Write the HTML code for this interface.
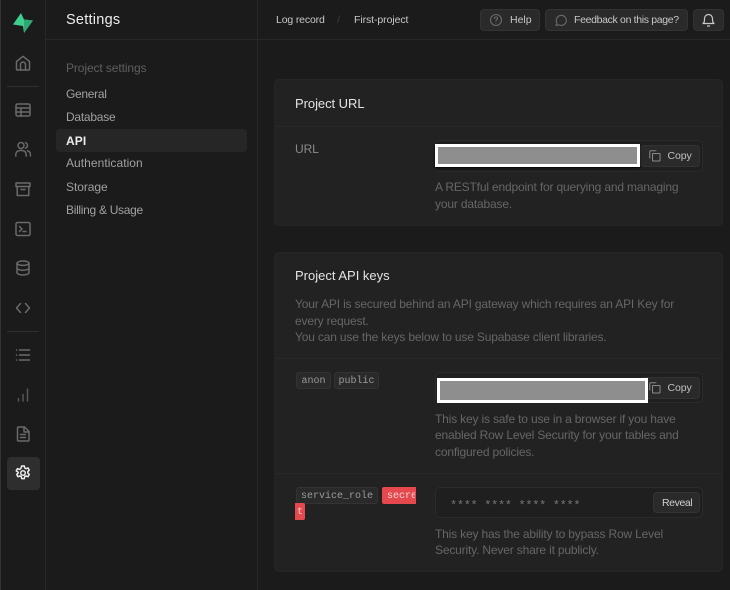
<!DOCTYPE html>
<html><head><meta charset="utf-8">
<style>
html,body{margin:0;padding:0;width:730px;height:590px;overflow:hidden;background:#1b1b1b;font-family:"Liberation Sans",sans-serif;}
#w{position:absolute;left:0;top:0;width:730px;height:590px;background:#1b1b1b;overflow:hidden;filter:blur(.35px);}
.a{position:absolute;white-space:nowrap;line-height:16px;}
.line{position:absolute;background:#282828;}
.ic{position:absolute;fill:none;stroke:#6a6a6a;stroke-width:1.5;stroke-linecap:round;stroke-linejoin:round;}
.nav{left:66px;font-size:12px;color:#a0a0a0;letter-spacing:-.05px;}
.desc{font-size:12px;color:#666;letter-spacing:-.17px;}
.card{position:absolute;left:274px;width:449px;background:#222;border:1px solid #262626;box-sizing:border-box;border-radius:5px;}
.btn{position:absolute;background:#2a2a2a;border:1px solid #333;box-sizing:border-box;border-radius:4px;}
.box{position:absolute;background:#1f1f1f;border:1px solid #2b2b2b;box-sizing:border-box;border-radius:5px;}
.tag{position:absolute;background:#2a2a2a;border:1px solid #333;box-sizing:border-box;border-radius:3px;font:10px/17px "Liberation Mono",monospace;color:#9a9a9a;text-align:center;}
.mask{position:absolute;background:#8e8e8e;border:3px solid #fff;box-sizing:border-box;}
.hd{font-size:10.5px;color:#c8c8c8;letter-spacing:-.15px;}
</style></head><body><div id="w">
<div class="a" style="left:0;top:0;width:1px;height:590px;background:#333"></div>
<div class="line" style="left:45px;top:0;width:1px;height:590px"></div>
<div class="line" style="left:257px;top:0;width:1px;height:590px"></div>
<div class="line" style="left:46px;top:39px;width:684px;height:1px"></div>

<svg class="a" style="left:13px;top:13px" width="21" height="21" viewBox="0 0 21 21"><path d="M8 0L11 6.500L20 7.500L11 20L10 13L0 11.500z" fill="#3ecf8e"/><path d="M11 6.500L20 7.500L11 20z" fill="#2fa873"/></svg>

<svg class="ic" style="left:15px;top:55px" width="16" height="16" viewBox="0 0 16 16"><path d="M1.500 6.500L8 1.300l6.500 5.200V14a1 1 0 0 1-1 1h-11a1 1 0 0 1-1-1z"/><path d="M5.500 15V9.500a2.500 2.500 0 0 1 5 0V15"/></svg>
<div class="line" style="left:7px;top:86px;width:32px;height:1px;background:#303030"></div>
<svg class="ic" style="left:15px;top:102px" width="16" height="16" viewBox="0 0 16 16"><rect x="1" y="2" width="14" height="12" rx="1.500"/><path d="M1 6h14M1 10h14M6 6v8"/></svg>
<svg class="ic" style="left:15px;top:141px" width="16" height="16" viewBox="0 0 16 16"><circle cx="6" cy="4.500" r="3"/><path d="M0.800 15v-1.500a4 4 0 0 1 4-4h2.400a4 4 0 0 1 4 4V15"/><path d="M10.500 1.700a3 3 0 0 1 0 5.600M12.500 9.800a4 4 0 0 1 3 3.700V15"/></svg>
<svg class="ic" style="left:15px;top:181px" width="16" height="16" viewBox="0 0 16 16"><rect x="1" y="2" width="14" height="3.500"/><path d="M2.200 5.500V14.500H13.800V5.500M6 8.500h4"/></svg>
<svg class="ic" style="left:15px;top:221px" width="16" height="16" viewBox="0 0 16 16"><rect x="1" y="1.500" width="14" height="13" rx="1.500"/><path d="M4.500 5.500L7 8l-2.500 2.500M8 10.500h3"/></svg>
<svg class="ic" style="left:15px;top:260px" width="16" height="16" viewBox="0 0 16 16"><ellipse cx="8" cy="3.200" rx="6" ry="2.200"/><path d="M2 3.200v9.600c0 1.200 2.700 2.200 6 2.200s6-1 6-2.200V3.200M2 8c0 1.200 2.700 2.200 6 2.200s6-1 6-2.200"/></svg>
<svg class="ic" style="left:15px;top:300px" width="16" height="16" viewBox="0 0 16 16"><path d="M5.500 3.500L1.500 8l4 4.500M10.500 3.500l4 4.500-4 4.500"/></svg>
<div class="line" style="left:7px;top:331px;width:32px;height:1px;background:#303030"></div>
<svg class="ic" style="left:15px;top:347px" width="16" height="16" viewBox="0 0 16 16"><path d="M4.500 3h10M4.500 8h10M4.500 13h10M1.500 3h.1M1.500 8h.1M1.500 13h.1"/></svg>
<svg class="ic" style="left:15px;top:387px;stroke:#565656" width="16" height="16" viewBox="0 0 16 16"><path d="M3.500 14v-2.500M8 14V7.500M12.500 14V2"/></svg>
<svg class="ic" style="left:15px;top:426px" width="16" height="16" viewBox="0 0 16 16"><path d="M3.500 1h6L14 5.500V14a1 1 0 0 1-1 1H3.500a1 1 0 0 1-1-1V2a1 1 0 0 1 1-1z"/><path d="M9 1v5h5M5.500 8.500h5M5.500 11.500h5"/></svg>
<div class="a" style="left:7px;top:457px;width:33px;height:33px;background:#2e2e2e;border-radius:4px"></div>
<svg class="ic" style="left:15px;top:465px;stroke:#ededed" width="16" height="16" viewBox="0 0 16 16"><circle cx="8" cy="8" r="2.300"/><path d="M6.700 1h2.600l.4 2 1.400.7 1.900-.8 1.300 2.300-1.500 1.300v1.600l1.500 1.300-1.300 2.300-1.900-.8-1.400.7-.4 2H6.700l-.4-2-1.400-.7-1.900.8-1.300-2.300 1.500-1.300V7.200L1.200 5.900l1.300-2.300 1.900.8 1.400-.7z"/></svg>

<div class="a" style="left:66px;top:11px;font-size:14.500px;line-height:18px;color:#ededed;letter-spacing:.25px">Settings</div>
<div class="a nav" style="top:60px;color:#5f5f5f;letter-spacing:-.1px">Project settings</div>
<div class="a nav" style="top:86px;letter-spacing:-.3px">General</div>
<div class="a nav" style="top:109px;letter-spacing:-.25px">Database</div>
<div class="a" style="left:56px;top:129px;width:191px;height:23px;background:#262626;border-radius:4px"></div>
<div class="a nav" style="top:132.500px;color:#ededed;font-weight:bold;letter-spacing:.1px">API</div>
<div class="a nav" style="top:155px;letter-spacing:.05px">Authentication</div>
<div class="a nav" style="top:178.500px;letter-spacing:-.05px">Storage</div>
<div class="a nav" style="top:202px;letter-spacing:-.3px">Billing &amp; Usage</div>

<div class="a hd" style="left:276px;top:12px">Log record</div>
<div class="a" style="left:337px;top:12px;font-size:10.500px;color:#3c3c3c">/</div>
<div class="a hd" style="left:354px;top:12px;letter-spacing:-.08px">First-project</div>

<div class="btn" style="left:480px;top:9px;width:60px;height:22px"></div>
<svg class="ic" style="left:489px;top:13px;stroke-width:1.100;stroke:#6a6a6a" width="14" height="14" viewBox="0 0 14 14"><circle cx="7" cy="7" r="5.500"/><path d="M5.500 5.500a1.500 1.500 0 1 1 2.200 1.300c-.5.300-.7.500-.7 1M7 10h.01"/></svg>
<div class="a hd" style="left:510px;top:12px;letter-spacing:0">Help</div>
<div class="btn" style="left:545px;top:9px;width:143px;height:22px"></div>
<svg class="ic" style="left:554px;top:13px;stroke-width:1.100;stroke:#6a6a6a" width="14" height="14" viewBox="0 0 14 14"><path d="M2 12.500l.9-2.800A5 5 0 1 1 5 11.800z"/></svg>
<div class="a hd" style="left:574px;top:12px;letter-spacing:-.33px">Feedback on this page?</div>
<div class="btn" style="left:693px;top:9px;width:31px;height:22px"></div>
<svg class="ic" style="left:702px;top:13px;stroke:#c8c8c8;stroke-width:1.200" width="13" height="14" viewBox="0 0 13 14"><path d="M1 10.500c1-.8 1.500-1.800 1.500-3.500V5.500a4 4 0 0 1 8 0V7c0 1.700.5 2.700 1.500 3.500zM5.500 13h2"/></svg>

<div class="card" style="top:79px;height:147px"></div>
<div class="line" style="left:275px;top:126px;width:447px;height:1px;background:#282828"></div>
<div class="a" style="left:295px;top:96px;font-size:13px;color:#e4e4e4;letter-spacing:-.05px">Project URL</div>
<div class="a" style="left:295px;top:141px;font-size:12px;color:#8a8a8a;letter-spacing:-.1px">URL</div>
<div class="box" style="left:435px;top:140px;width:268px;height:32px"></div>
<div class="btn" style="left:640px;top:145px;width:60px;height:22px"></div>
<svg class="ic" style="left:649px;top:150px;stroke-width:1;stroke:#8a8a8a" width="12" height="12" viewBox="0 0 12 12"><path d="M.8 8V1.500a.7.7 0 0 1 .7-.7H7"/><rect x="3.500" y="3.500" width="7.500" height="7.500" rx=".5"/></svg>
<div class="a" style="left:667.500px;top:148px;font-size:10.500px;color:#c0c0c0;letter-spacing:-.1px">Copy</div>
<div class="mask" style="left:434.500px;top:144px;width:205px;height:23px;box-shadow:0 1px 2px #000"></div>
<div class="a desc" style="left:435px;top:179px">A RESTful endpoint for querying and managing</div>
<div class="a desc" style="left:435px;top:195.500px">your database.</div>

<div class="card" style="top:252px;height:320px"></div>
<div class="a" style="left:295px;top:268px;font-size:13px;color:#e4e4e4;letter-spacing:0">Project API keys</div>
<div class="a desc" style="left:295px;top:296px">Your API is secured behind an API gateway which requires an API Key for</div>
<div class="a desc" style="left:295px;top:313px">every request.</div>
<div class="a desc" style="left:295px;top:329px">You can use the keys below to use Supabase client libraries.</div>
<div class="line" style="left:275px;top:358px;width:447px;height:1px;background:#282828"></div>

<div class="tag" style="left:296px;top:372px;width:35px;height:17px">anon</div>
<div class="tag" style="left:334px;top:372px;width:45px;height:17px">public</div>
<div class="box" style="left:435px;top:372px;width:268px;height:31px"></div>
<div class="btn" style="left:640px;top:377px;width:60px;height:22px"></div>
<svg class="ic" style="left:649px;top:382px;stroke-width:1;stroke:#8a8a8a" width="12" height="12" viewBox="0 0 12 12"><path d="M.8 8V1.500a.7.7 0 0 1 .7-.7H7"/><rect x="3.500" y="3.500" width="7.500" height="7.500" rx=".5"/></svg>
<div class="a" style="left:667.500px;top:380px;font-size:10.500px;color:#c0c0c0;letter-spacing:-.1px">Copy</div>
<div class="mask" style="left:437px;top:378px;width:211px;height:25px"></div>
<div class="a desc" style="left:435px;top:411px">This key is safe to use in a browser if you have</div>
<div class="a desc" style="left:435px;top:427px">enabled Row Level Security for your tables and</div>
<div class="a desc" style="left:435px;top:444px">configured policies.</div>
<div class="line" style="left:275px;top:473px;width:447px;height:1px;background:#282828"></div>

<div class="tag" style="left:296px;top:487px;width:82px;height:17px">service_role</div>
<div class="tag" style="left:382px;top:487px;width:34px;height:17px;background:#e5484d;border-color:#e5484d;color:#f4d4d4;text-align:left;padding-left:4px;border-radius:2px 0 0 2px;overflow:hidden">secre</div>
<div class="tag" style="left:295px;top:503px;width:10px;height:17px;background:#e5484d;border-color:#e5484d;color:#f4d4d4;text-align:left;padding-left:1px;border-radius:0 2px 2px 0">t</div>
<div class="box" style="left:435px;top:487px;width:268px;height:31px"></div>
<div class="a" style="left:450px;top:498px;font:12px/16px 'Liberation Mono',monospace;color:#777;letter-spacing:-.35px">**** **** **** ****</div>
<div class="btn" style="left:653px;top:492px;width:47px;height:21px"></div>
<div class="a" style="left:662px;top:494.500px;font-size:10.500px;color:#d0d0d0;letter-spacing:-.4px">Reveal</div>
<div class="a desc" style="left:435px;top:525.500px">This key has the ability to bypass Row Level</div>
<div class="a desc" style="left:435px;top:542px">Security. Never share it publicly.</div>
</div></body></html>
